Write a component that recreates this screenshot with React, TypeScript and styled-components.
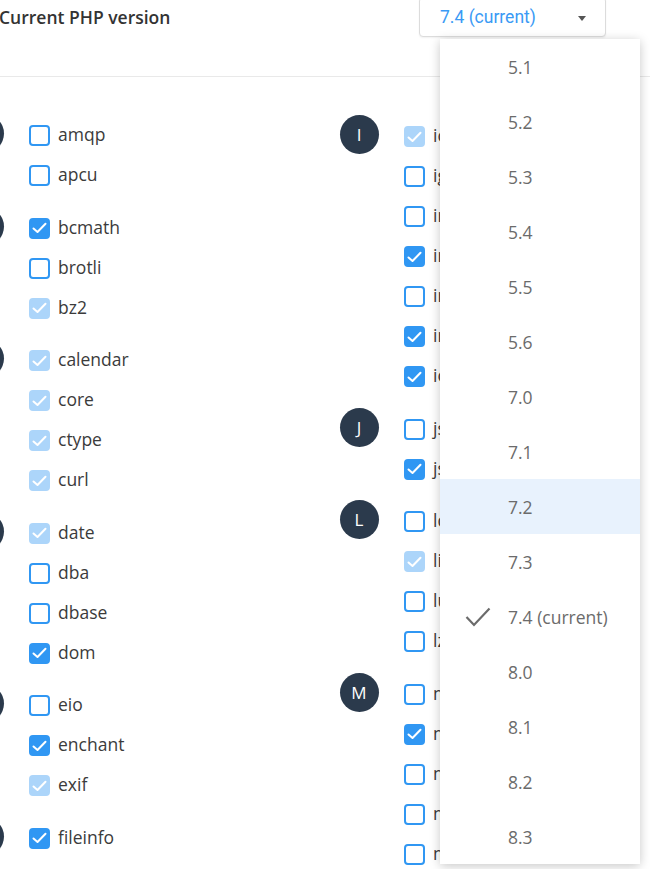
import React from "react";
import styled, { createGlobalStyle } from "styled-components";

const GlobalStyle = createGlobalStyle`
  html, body {
    margin: 0;
    padding: 0;
    background: #fff;
    overflow: hidden;
  }
  body {
    font-family: "Open Sans", "Liberation Sans", sans-serif;
    font-size: 17.5px;
    color: #3b3b3b;
  }
`;

const Page = styled.div`
  width: 650px;
  height: 869px;
  overflow: hidden;
`;

const Header = styled.div`
  display: flex;
  align-items: flex-start;
  justify-content: space-between;
  height: 80px;
  margin-top: -3px;
  padding-right: 44px;
  border-bottom: 1px solid #e9e9e9;
  box-sizing: border-box;
`;

const Title = styled.h2`
  margin: 0 0 0 -1px;
  font-size: 17.5px;
  font-weight: 600;
  line-height: 40px;
  color: #333;
`;

const VersionSelect = styled.div`
  position: relative;
`;

const SelectButton = styled.button`
  display: flex;
  align-items: center;
  justify-content: space-between;
  width: 187px;
  height: 40px;
  padding: 0 20px 0 20px;
  background: #fff;
  border: 1px solid #dcdcdc;
  border-radius: 4px;
  box-shadow: 0 1px 2px rgba(0, 0, 0, 0.06);
  font-family: Roboto, "Liberation Sans", sans-serif;
  font-size: 17.5px;
  color: #3a9af5;
  cursor: pointer;
`;

const Caret = styled.span`
  width: 0;
  height: 0;
  border-left: 4.5px solid transparent;
  border-right: 4.5px solid transparent;
  border-top: 5px solid #555;
  margin: 2px -1px 0 0;
`;

const Menu = styled.ul`
  position: absolute;
  top: 42px;
  left: 21px;
  width: 200px;
  margin: 0;
  padding: 0;
  list-style: none;
  background: #fff;
  box-shadow: 0 2px 10px rgba(0, 0, 0, 0.22);
  z-index: 10;
`;

const MenuItem = styled.li<{ $hover?: boolean }>`
  position: relative;
  height: 55px;
  display: flex;
  align-items: center;
  padding-left: 68px;
  background: ${p => (p.$hover ? "#e8f2fd" : "#fff")};
  color: #6b6b6b;
  font-size: 17.5px;
`;

const MenuCheck = styled.svg`
  position: absolute;
  left: 25px;
  top: 17px;
`;

const Columns = styled.div`
  display: grid;
  grid-template-columns: 374px 374px;
  margin-left: -35.5px;
  padding-top: 37px;
`;

const Column = styled.div<{ $shift?: number }>`
  display: flex;
  flex-direction: column;
  gap: 12.5px;
  margin-top: ${p => p.$shift || 0}px;
  margin-left: ${p => p.$shift || 0}px;
`;

const Group = styled.div`
  display: flex;
  align-items: flex-start;
`;

const Badge = styled.div`
  flex: none;
  width: 39px;
  height: 39px;
  margin-right: 25.5px;
  border-radius: 50%;
  background: #2b3a4c;
  color: #fff;
  display: flex;
  align-items: center;
  justify-content: center;
  font-size: 17px;
  font-weight: 400;
`;

const Items = styled.div`
  display: flex;
  flex-direction: column;
`;

const Row = styled.label`
  display: flex;
  align-items: center;
  height: 40px;
  gap: 8px;
  white-space: nowrap;
`;

const Box = styled.span<{ $state: "off" | "on" | "fixed" }>`
  flex: none;
  width: 21px;
  height: 21px;
  box-sizing: border-box;
  border-radius: 4px;
  margin-top: 3px;
  display: flex;
  align-items: center;
  justify-content: center;
  border: 2px solid
    ${p => (p.$state === "fixed" ? "#acd5fa" : "#3097f3")};
  background: ${p =>
    p.$state === "on" ? "#3097f3" : p.$state === "fixed" ? "#acd5fa" : "#fff"};
`;

type State = "off" | "on" | "fixed";

const groups: { letter: string; items: [string, State][] }[][] = [
  [
    { letter: "A", items: [["amqp", "off"], ["apcu", "off"]] },
    {
      letter: "B",
      items: [["bcmath", "on"], ["brotli", "off"], ["bz2", "fixed"]]
    },
    {
      letter: "C",
      items: [
        ["calendar", "fixed"],
        ["core", "fixed"],
        ["ctype", "fixed"],
        ["curl", "fixed"]
      ]
    },
    {
      letter: "D",
      items: [["date", "fixed"], ["dba", "off"], ["dbase", "off"], ["dom", "on"]]
    },
    {
      letter: "E",
      items: [["eio", "off"], ["enchant", "on"], ["exif", "fixed"]]
    },
    { letter: "F", items: [["fileinfo", "on"]] }
  ],
  [
    {
      letter: "I",
      items: [
        ["iconv", "fixed"],
        ["igbinary", "off"],
        ["imagick", "off"],
        ["imap", "on"],
        ["inotify", "off"],
        ["intl", "on"],
        ["ioncube", "on"]
      ]
    },
    { letter: "J", items: [["jsmin", "off"], ["json", "on"]] },
    {
      letter: "L",
      items: [
        ["ldap", "off"],
        ["libxml", "fixed"],
        ["luasandbox", "off"],
        ["lzf", "off"]
      ]
    },
    {
      letter: "M",
      items: [
        ["mailparse", "off"],
        ["mbstring", "on"],
        ["mcrypt", "off"],
        ["memcache", "off"],
        ["memcached", "off"]
      ]
    }
  ]
];

const versions = [
  "5.1", "5.2", "5.3", "5.4", "5.5", "5.6", "7.0", "7.1",
  "7.2", "7.3", "7.4 (current)", "8.0", "8.1", "8.2", "8.3"
];

function Tick() {
  return (
    <svg width="15" height="12" viewBox="0 0 15 12">
      <path
        d="M1.5 6.5 L5.5 10 L13.5 1.8"
        fill="none"
        stroke="#fff"
        strokeWidth="2"
        strokeLinecap="round"
        strokeLinejoin="round"
      />
    </svg>
  );
}

export default function App() {
  return (
    <Page>
      <GlobalStyle />
      <Header>
        <Title>Current PHP version</Title>
        <VersionSelect>
          <SelectButton>
            7.4 (current)
            <Caret />
          </SelectButton>
          <Menu>
            {versions.map(v => (
              <MenuItem key={v} $hover={v === "7.2"}>
                {v === "7.4 (current)" && (
                  <MenuCheck width="26" height="22" viewBox="0 0 26 22">
                    <path
                      d="M1.5 11 L9 19 L24.5 2.5"
                      fill="none"
                      stroke="#6b6b6b"
                      strokeWidth="2.2"
                    />
                  </MenuCheck>
                )}
                {v}
              </MenuItem>
            ))}
          </Menu>
        </VersionSelect>
      </Header>
      <Columns>
        {groups.map((col, i) => (
          <Column key={i} $shift={i === 1 ? 1 : 0}>
            {col.map(g => (
              <Group key={g.letter}>
                <Badge>{g.letter}</Badge>
                <Items>
                  {g.items.map(([name, state]) => (
                    <Row key={name}>
                      <Box $state={state}>{state !== "off" && <Tick />}</Box>
                      {name}
                    </Row>
                  ))}
                </Items>
              </Group>
            ))}
          </Column>
        ))}
      </Columns>
    </Page>
  );
}
